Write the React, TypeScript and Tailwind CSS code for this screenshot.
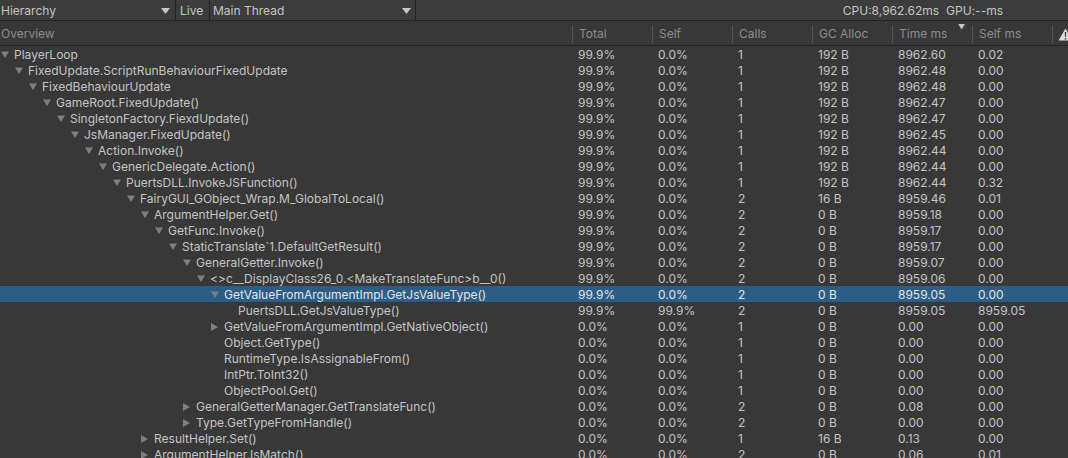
import React from 'react';

type Row = {
  level: number;
  name: string;
  open?: boolean; // undefined = leaf
  total: string;
  self: string;
  calls: string;
  gc: string;
  time: string;
  selfMs: string;
  selected?: boolean;
};

const rows: Row[] = [
  { level: 0, name: 'PlayerLoop', open: true, total: '99.9%', self: '0.0%', calls: '1', gc: '192 B', time: '8962.60', selfMs: '0.02' },
  { level: 1, name: 'FixedUpdate.ScriptRunBehaviourFixedUpdate', open: true, total: '99.9%', self: '0.0%', calls: '1', gc: '192 B', time: '8962.48', selfMs: '0.00' },
  { level: 2, name: 'FixedBehaviourUpdate', open: true, total: '99.9%', self: '0.0%', calls: '1', gc: '192 B', time: '8962.48', selfMs: '0.00' },
  { level: 3, name: 'GameRoot.FixedUpdate()', open: true, total: '99.9%', self: '0.0%', calls: '1', gc: '192 B', time: '8962.47', selfMs: '0.00' },
  { level: 4, name: 'SingletonFactory.FiexdUpdate()', open: true, total: '99.9%', self: '0.0%', calls: '1', gc: '192 B', time: '8962.47', selfMs: '0.00' },
  { level: 5, name: 'JsManager.FixedUpdate()', open: true, total: '99.9%', self: '0.0%', calls: '1', gc: '192 B', time: '8962.45', selfMs: '0.00' },
  { level: 6, name: 'Action.Invoke()', open: true, total: '99.9%', self: '0.0%', calls: '1', gc: '192 B', time: '8962.44', selfMs: '0.00' },
  { level: 7, name: 'GenericDelegate.Action()', open: true, total: '99.9%', self: '0.0%', calls: '1', gc: '192 B', time: '8962.44', selfMs: '0.00' },
  { level: 8, name: 'PuertsDLL.InvokeJSFunction()', open: true, total: '99.9%', self: '0.0%', calls: '1', gc: '192 B', time: '8962.44', selfMs: '0.32' },
  { level: 9, name: 'FairyGUI_GObject_Wrap.M_GlobalToLocal()', open: true, total: '99.9%', self: '0.0%', calls: '2', gc: '16 B', time: '8959.46', selfMs: '0.01' },
  { level: 10, name: 'ArgumentHelper.Get()', open: true, total: '99.9%', self: '0.0%', calls: '2', gc: '0 B', time: '8959.18', selfMs: '0.00' },
  { level: 11, name: 'GetFunc.Invoke()', open: true, total: '99.9%', self: '0.0%', calls: '2', gc: '0 B', time: '8959.17', selfMs: '0.00' },
  { level: 12, name: 'StaticTranslate`1.DefaultGetResult()', open: true, total: '99.9%', self: '0.0%', calls: '2', gc: '0 B', time: '8959.17', selfMs: '0.00' },
  { level: 13, name: 'GeneralGetter.Invoke()', open: true, total: '99.9%', self: '0.0%', calls: '2', gc: '0 B', time: '8959.07', selfMs: '0.00' },
  { level: 14, name: '<>c__DisplayClass26_0.<MakeTranslateFunc>b__0()', open: true, total: '99.9%', self: '0.0%', calls: '2', gc: '0 B', time: '8959.06', selfMs: '0.00' },
  { level: 15, name: 'GetValueFromArgumentImpl.GetJsValueType()', open: true, total: '99.9%', self: '0.0%', calls: '2', gc: '0 B', time: '8959.05', selfMs: '0.00', selected: true },
  { level: 16, name: 'PuertsDLL.GetJsValueType()', total: '99.9%', self: '99.9%', calls: '2', gc: '0 B', time: '8959.05', selfMs: '8959.05' },
  { level: 15, name: 'GetValueFromArgumentImpl.GetNativeObject()', open: false, total: '0.0%', self: '0.0%', calls: '1', gc: '0 B', time: '0.00', selfMs: '0.00' },
  { level: 15, name: 'Object.GetType()', total: '0.0%', self: '0.0%', calls: '1', gc: '0 B', time: '0.00', selfMs: '0.00' },
  { level: 15, name: 'RuntimeType.IsAssignableFrom()', total: '0.0%', self: '0.0%', calls: '1', gc: '0 B', time: '0.00', selfMs: '0.00' },
  { level: 15, name: 'IntPtr.ToInt32()', total: '0.0%', self: '0.0%', calls: '1', gc: '0 B', time: '0.00', selfMs: '0.00' },
  { level: 15, name: 'ObjectPool.Get()', total: '0.0%', self: '0.0%', calls: '1', gc: '0 B', time: '0.00', selfMs: '0.00' },
  { level: 13, name: 'GeneralGetterManager.GetTranslateFunc()', open: false, total: '0.0%', self: '0.0%', calls: '2', gc: '0 B', time: '0.08', selfMs: '0.00' },
  { level: 13, name: 'Type.GetTypeFromHandle()', open: false, total: '0.0%', self: '0.0%', calls: '2', gc: '0 B', time: '0.00', selfMs: '0.00' },
  { level: 10, name: 'ResultHelper.Set()', open: false, total: '0.0%', self: '0.0%', calls: '1', gc: '16 B', time: '0.13', selfMs: '0.00' },
  { level: 10, name: 'ArgumentHelper.IsMatch()', open: false, total: '0.0%', self: '0.0%', calls: '2', gc: '0 B', time: '0.06', selfMs: '0.01' },
];

const Arrow = ({ open }: { open: boolean }) =>
  open ? (
    <svg width="8" height="7" viewBox="0 0 8 7" className="shrink-0">
      <path d="M0 0.5h8L4 7z" fill="#7f7f7f" />
    </svg>
  ) : (
    <svg width="7" height="8" viewBox="0 0 7 8" className="shrink-0">
      <path d="M0 0v8L7 4z" fill="#7f7f7f" />
    </svg>
  );

const DropArrow = () => (
  <svg width="9" height="6" viewBox="0 0 9 6">
    <path d="M0 0h9L4.5 6z" fill="#c8c8c8" />
  </svg>
);

const cols = ['Total', 'Self', 'Calls', 'GC Alloc', 'Time ms', 'Self ms'];

export default function App() {
  return (
    <div
      className="w-[1068px] h-[458px] overflow-hidden bg-[#383838] text-[12px] text-[#c4c4c4] leading-none"
      style={{ fontFamily: 'Inter, "Liberation Sans", sans-serif' }}
    >
      {/* toolbar */}
      <div className="flex h-[21px] items-center bg-[#3c3c3c] border-b border-[#232323]">
        <div className="flex w-[176px] h-full items-center justify-between pl-[1px] pr-[5px] pt-[1px] border-r border-[#232323]">
          <span>Hierarchy</span>
          <DropArrow />
        </div>
        <div className="flex w-[34px] h-full items-center pl-[4px] pt-[1px] border-r border-[#232323]">Live</div>
        <div className="flex w-[206px] h-full items-center justify-between pl-[3px] pr-[4px] pt-[1px] border-r border-[#232323]">
          <span>Main Thread</span>
          <DropArrow />
        </div>
        <div className="flex-1 flex justify-end pr-[65px] pt-[1px] gap-[7px]">
          <span>CPU:8,962.62ms</span>
          <span>GPU:--ms</span>
        </div>
      </div>

      {/* header */}
      <div className="flex h-[25px] items-center pt-[2px] bg-[#383838] border-b border-[#232323] text-[#8c8c8c]">
        <div className="w-[572px] shrink-0 pl-[1px]">Overview</div>
        {cols.map((c) => (
          <div key={c} className="relative flex w-[80px] shrink-0 h-[17px] items-center pl-[6px] border-l border-[#555555]">
            {c}
            {c === 'Time ms' && (
              <span className="absolute right-[7px] top-[-2px] text-[7px] text-[#c8c8c8]">▼</span>
            )}
          </div>
        ))}
        <div className="flex shrink-0 h-[17px] items-center pl-[5px] border-l border-[#555555]">
          <svg width="15" height="13" viewBox="0 0 15 13" className="shrink-0">
            <path d="M7.5 0.5L14.5 12.5H0.5z" fill="#dcdcdc" />
            <path d="M6.8 4h1.4l-0.2 5h-1z M6.8 10h1.4v1.4h-1.4z" fill="#383838" />
          </svg>
        </div>
      </div>

      {/* rows */}
      <div className="flex flex-col">
        {rows.map((r, i) => (
          <div
            key={i}
            className={`flex h-[16px] items-center pt-[1px] ${r.selected ? 'bg-[#2c5d87] text-[#e4e4e4]' : ''}`}
          >
            <div className="flex w-[572px] shrink-0 items-center" style={{ paddingLeft: 1 + r.level * 14 }}>
              <div className="flex w-[13px] shrink-0 items-center">
                {r.open !== undefined && <Arrow open={r.open} />}
              </div>
              <span className="whitespace-nowrap">{r.name}</span>
            </div>
            <div className="w-[80px] shrink-0 pl-[6px]">{r.total}</div>
            <div className="w-[80px] shrink-0 pl-[6px]">{r.self}</div>
            <div className="w-[80px] shrink-0 pl-[6px]">{r.calls}</div>
            <div className="w-[80px] shrink-0 pl-[6px]">{r.gc}</div>
            <div className="w-[80px] shrink-0 pl-[6px]">{r.time}</div>
            <div className="w-[80px] shrink-0 pl-[6px]">{r.selfMs}</div>
          </div>
        ))}
      </div>
    </div>
  );
}
